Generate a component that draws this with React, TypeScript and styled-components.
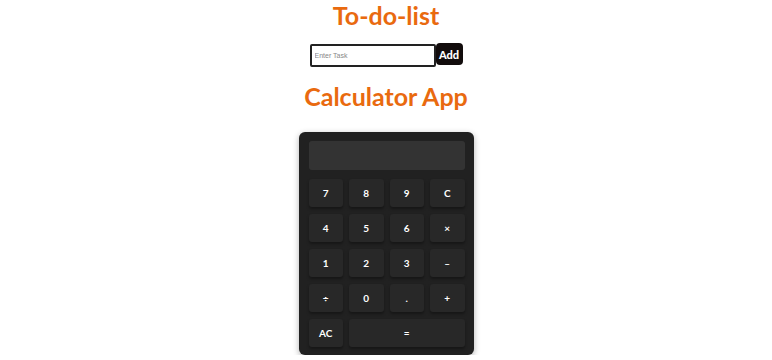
import React, { useState } from 'react';
import styled, { createGlobalStyle } from 'styled-components';

const GlobalStyle = createGlobalStyle`
  body {
    margin: 0;
    background: #ffffff;
    font-family: 'Lato', 'Open Sans', sans-serif;
  }
`;

const keys: { label: string; wide?: boolean }[] = [
  { label: '7' }, { label: '8' }, { label: '9' }, { label: 'C' },
  { label: '4' }, { label: '5' }, { label: '6' }, { label: '×' },
  { label: '1' }, { label: '2' }, { label: '3' }, { label: '–' },
  { label: '÷' }, { label: '0' }, { label: '.' }, { label: '+' },
  { label: 'AC' }, { label: '=', wide: true },
];

const App = () => {
  const [task, setTask] = useState('');
  const [display, setDisplay] = useState('');

  const press = (label: string) => {
    if (label === 'AC') setDisplay('');
    else if (label === 'C') setDisplay(display.slice(0, -1));
    else if (label !== '=') setDisplay(display + label);
  };

  return (
    <SPage>
      <GlobalStyle />
      <STitle>To-do-list</STitle>
      <STaskRow>
        <STaskInput
          placeholder="Enter Task"
          value={task}
          onChange={(e) => setTask(e.target.value)}
        />
        <SAddButton onClick={() => setTask('')}>Add</SAddButton>
      </STaskRow>
      <STitle>Calculator App</STitle>
      <SCalculator>
        <SDisplay>{display}</SDisplay>
        <SKeys>
          {keys.map((k) => (
            <SKey key={k.label} wide={k.wide} onClick={() => press(k.label)}>
              {k.label}
            </SKey>
          ))}
        </SKeys>
      </SCalculator>
    </SPage>
  );
};

export default App;

const SPage = styled.div`
  display: flex;
  flex-direction: column;
  align-items: center;
`;

const STitle = styled.h1`
  margin: 0;
  color: #e96a0f;
  font-size: 25px;
  font-weight: 700;
  line-height: 30px;
`;

const STaskRow = styled.div`
  display: flex;
  align-items: flex-start;
  margin: 14px 0 14px 0;
`;

const STaskInput = styled.input`
  width: 126px;
  height: 23px;
  box-sizing: border-box;
  border: 2px solid #222;
  border-radius: 2px;
  padding: 0 3px;
  font-size: 7px;
  font-family: 'Liberation Sans', sans-serif;
  outline: none;
  &::placeholder {
    color: #888;
  }
`;

const SAddButton = styled.button`
  height: 22px;
  width: 27px;
  margin-top: -1px;
  padding: 0;
  border: none;
  border-radius: 4px;
  background: #120c0c;
  color: #fff;
  font-family: 'Lato', sans-serif;
  font-weight: 900;
  font-size: 11px;
  cursor: pointer;
`;

const SCalculator = styled.div`
  margin-top: 21px;
  width: 175px;
  box-sizing: border-box;
  padding: 9px 9px 8px 10px;
  background: #212121;
  border-radius: 6px;
  box-shadow: 0 2px 6px rgba(0, 0, 0, 0.3);
`;

const SDisplay = styled.div`
  height: 29px;
  margin-bottom: 9px;
  background: #333333;
  border-radius: 3px;
  color: #fff;
  font-size: 14px;
  text-align: right;
  line-height: 29px;
  padding: 0 6px;
`;

const SKeys = styled.div`
  display: grid;
  grid-template-columns: repeat(4, 1fr);
  grid-auto-rows: 28px;
  column-gap: 6px;
  row-gap: 7px;
`;

const SKey = styled.button<{ wide?: boolean }>`
  grid-column: ${(p) => (p.wide ? 'span 3' : 'span 1')};
  border: none;
  border-radius: 3px;
  background: #282828;
  color: #fff;
  font-family: 'Lato', sans-serif;
  font-weight: 700;
  font-size: 10px;
  box-shadow: 0 2px 3px rgba(0, 0, 0, 0.35);
  cursor: pointer;
`;
